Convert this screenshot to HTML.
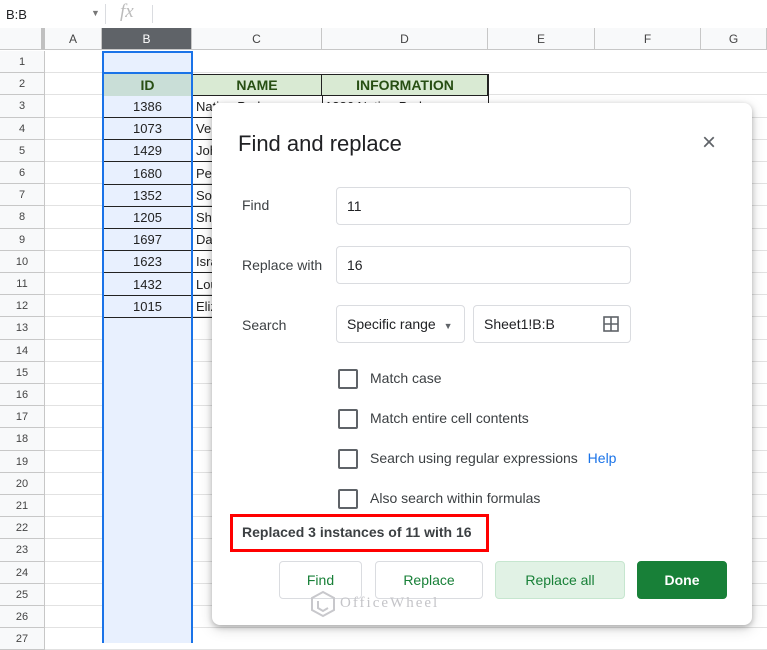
<!DOCTYPE html>
<html><head><style>
body{margin:0;width:767px;height:643px;overflow:hidden;background:#fff;font-family:"Liberation Sans",Arial,sans-serif;position:relative}
.abs{position:absolute}
.fb{left:0;top:0;width:767px;height:28px;border-bottom:1px solid #c7c7c7;background:#fff}
.ch{top:28px;height:22px;background:#f8f9fa;border-right:1px solid #c7c7c7;border-bottom:1px solid #c7c7c7;font-size:12px;color:#444;text-align:center;line-height:22px;box-sizing:border-box}
.rh{left:0;width:45px;height:22px;background:#f8f9fa;border-right:1px solid #c7c7c7;border-bottom:1px solid #c7c7c7;font-size:11px;color:#444;text-align:center;line-height:22px;box-sizing:border-box}
.cell{height:22px;font-size:13px;line-height:22px;box-sizing:border-box;white-space:nowrap;overflow:hidden}
.gl{background:#e2e2e2}
.dlg{left:212px;top:103px;width:540px;height:522px;background:#fff;border-radius:8px;box-shadow:0 2px 6px rgba(0,0,0,.25),0 4px 14px rgba(0,0,0,.15)}
.lbl{font-size:14px;color:#3c4043}
.inp{border:1px solid #dadce0;border-radius:4px;box-sizing:border-box;height:38px;font-size:14px;color:#202124;line-height:36px;padding-left:10px}
.cb{width:16px;height:16px;border:2px solid #5f6368;border-radius:2px}
.btn{height:38px;border-radius:4px;box-sizing:border-box;font-size:14px;line-height:36px;text-align:center;color:#188038;border:1px solid #dadce0}
</style></head><body>
<div class="abs fb">
<div class="abs" style="left:6px;top:7px;font-size:13px;color:#202124">B:B</div>
<div class="abs" style="left:91px;top:8px;font-size:9px;color:#777">▼</div>
<div class="abs" style="left:105px;top:4px;width:1px;height:20px;background:#dadce0"></div>
<div class="abs" style="left:120px;top:1px;font-size:19px;color:#bbb;font-family:'Liberation Serif',serif;font-style:italic">fx</div>
<div class="abs" style="left:152px;top:5px;width:1px;height:18px;background:#dadce0"></div>
</div>
<div class="abs ch" style="left:0;width:45px;border-right:4px solid #c0c0c0"></div>
<div class="abs ch" style="left:45px;width:57px">A</div>
<div class="abs ch" style="left:102px;width:90px;background:#5f6368;color:#fff">B</div>
<div class="abs ch" style="left:192px;width:130px">C</div>
<div class="abs ch" style="left:322px;width:166px">D</div>
<div class="abs ch" style="left:488px;width:107px">E</div>
<div class="abs ch" style="left:595px;width:106px">F</div>
<div class="abs ch" style="left:701px;width:66px">G</div>
<div id="rows"></div>
<script>
var ids=[1386,1073,1429,1680,1352,1205,1697,1623,1432,1015];
var nm=["Nation Park","Vera","John","Peter","Sonia","Sheila","Dave","Israel","Louis","Eliza"];
var h="";
for(var i=1;i<=27;i++){var t=51+(i-1)*22.2;
h+='<div class="abs rh" style="top:'+t+'px;height:22.2px;line-height:22px">'+i+'</div>';
h+='<div class="abs gl" style="left:45px;top:'+(t+21.2)+'px;width:722px;height:1px"></div>';}
h+='<div class="abs" style="left:103px;top:51px;width:88px;height:592px;background:#e8f0fe"></div>';
h+='<div class="abs" style="left:102px;top:51px;width:2px;height:592px;background:#1a73e8"></div>';
h+='<div class="abs" style="left:191px;top:51px;width:2px;height:592px;background:#1a73e8"></div>';
h+='<div class="abs" style="left:102px;top:51px;width:91px;height:2px;background:#1a73e8"></div>';
h+='<div class="abs" style="left:102px;top:72px;width:91px;height:2px;background:#1a73e8"></div>';
h+='<div class="abs cell" style="left:104px;top:74px;width:87px;height:22px;background:#c9ded7;text-align:center;font-weight:bold;color:#274e13;font-size:14px">ID</div>';
h+='<div class="abs cell" style="left:193px;top:74px;width:295px;height:22px;background:#d9ead3;border:1px solid #222;border-left:0"></div>';
h+='<div class="abs cell" style="left:193px;top:74px;width:129px;text-align:center;font-weight:bold;color:#274e13;font-size:14px;border-right:1px solid #222">NAME</div>';
h+='<div class="abs cell" style="left:322px;top:74px;width:166px;text-align:center;font-weight:bold;color:#274e13;font-size:14px">INFORMATION</div>';
for(var j=0;j<10;j++){var t=96+j*22.2;
h+='<div class="abs cell" style="left:104px;top:'+t+'px;width:87px;text-align:center;color:#222">'+ids[j]+'</div>';
h+='<div class="abs" style="left:104px;top:'+(t+21)+'px;width:87px;height:1px;background:#222"></div>';
h+='<div class="abs cell" style="left:196px;top:'+t+'px;width:124px;color:#222">'+nm[j]+'</div>';
h+='<div class="abs" style="left:193px;top:'+(t+21)+'px;width:295px;height:1px;background:#222"></div>';}
h+='<div class="abs" style="left:322px;top:96px;width:1px;height:222px;background:#222"></div>';
h+='<div class="abs" style="left:488px;top:74px;width:1px;height:244px;background:#222"></div>';
h+='<div class="abs cell" style="left:325px;top:96px;width:160px;color:#222">1386 Nation Park</div>';
document.getElementById("rows").innerHTML=h;
</script>
<div class="abs dlg">
<div class="abs" style="left:26px;top:28px;font-size:22px;color:#202124">Find and replace</div>
<div class="abs" style="left:490px;top:26px;font-size:24px;color:#5f6368">×</div>
<div class="abs lbl" style="left:30px;top:94px">Find</div>
<div class="abs inp" style="left:124px;top:84px;width:295px">11</div>
<div class="abs lbl" style="left:30px;top:154px">Replace with</div>
<div class="abs inp" style="left:124px;top:143px;width:295px">16</div>
<div class="abs lbl" style="left:30px;top:214px">Search</div>
<div class="abs inp" style="left:124px;top:202px;width:129px">Specific range <span style="font-size:9px;color:#5f6368;margin-left:4px">▼</span></div>
<div class="abs inp" style="left:261px;top:202px;width:158px">Sheet1!B:B</div>
<svg class="abs" style="left:391px;top:213px" width="16" height="16" viewBox="0 0 16 16"><rect x="1" y="1" width="14" height="14" fill="none" stroke="#5f6368" stroke-width="1.6"/><path d="M8 1V15M1 8H15" stroke="#5f6368" stroke-width="1.6"/></svg>
<div class="abs cb" style="left:126px;top:266px"></div><div class="abs lbl" style="left:158px;top:267px">Match case</div>
<div class="abs cb" style="left:126px;top:306px"></div><div class="abs lbl" style="left:158px;top:307px">Match entire cell contents</div>
<div class="abs cb" style="left:126px;top:346px"></div><div class="abs lbl" style="left:158px;top:347px">Search using regular expressions <span style="color:#1a73e8;margin-left:6px">Help</span></div>
<div class="abs cb" style="left:126px;top:386px"></div><div class="abs lbl" style="left:158px;top:387px">Also search within formulas</div>
<div class="abs" style="left:18px;top:411px;width:259px;height:38px;border:3px solid #ff0000;box-sizing:border-box"></div>
<div class="abs" style="left:30px;top:421px;font-size:14px;font-weight:bold;color:#3c4043">Replaced 3 instances of 11 with 16</div>
<div class="abs btn" style="left:67px;top:458px;width:83px">Find</div>
<div class="abs btn" style="left:163px;top:458px;width:108px">Replace</div>
<div class="abs btn" style="left:283px;top:458px;width:130px;background:#e1f2e5;border-color:#c6e6cf">Replace all</div>
<div class="abs btn" style="left:425px;top:458px;width:90px;background:#188038;border-color:#188038;color:#fff;font-weight:bold">Done</div>
<div class="abs" style="left:128px;top:492px;font-size:15px;letter-spacing:2px;color:#c4c4c8;font-family:'Liberation Serif',serif">OfficeWheel</div>
<svg class="abs" style="left:98px;top:487px" width="26" height="28" viewBox="0 0 26 28"><path d="M13 2L24 8V20L13 26L2 20V8Z" fill="none" stroke="#c8c8cc" stroke-width="2"/><path d="M8 11V18L13 21L18 18" fill="none" stroke="#c8c8cc" stroke-width="2"/></svg>
</div>
</body></html>
